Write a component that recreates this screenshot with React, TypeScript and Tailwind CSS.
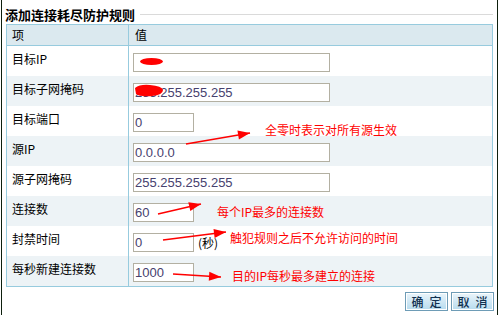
import React from "react";

interface RuleRow {
  label: string;
  value: string;
  wide?: boolean;
  suffix?: string;
}

const rows: RuleRow[] = [
  { label: "目标IP", value: "", wide: true },
  { label: "目标子网掩码", value: "255.255.255.255", wide: true },
  { label: "目标端口", value: "0" },
  { label: "源IP", value: "0.0.0.0", wide: true },
  { label: "源子网掩码", value: "255.255.255.255", wide: true },
  { label: "连接数", value: "60" },
  { label: "封禁时间", value: "0", suffix: "(秒)" },
  { label: "每秒新建连接数", value: "1000" },
];

// red hand-drawn notes laid over the screenshot
const notes = [
  { text: "全零时表示对所有源生效", className: "left-[265px] top-[124px]" },
  { text: "每个IP最多的连接数", className: "left-[217px] top-[206px]" },
  { text: "触犯规则之后不允许访问的时间", className: "left-[230px] top-[232px]" },
  { text: "目的IP每秒最多建立的连接", className: "left-[232px] top-[270px]" },
];

const arrows = [
  [186, 144, 250, 133],
  [158, 214, 201, 204],
  [163, 240, 226, 232],
  [173, 274, 221, 277],
];

function arrowHead(x1: number, y1: number, x2: number, y2: number) {
  const len = Math.hypot(x2 - x1, y2 - y1);
  const ux = (x2 - x1) / len;
  const uy = (y2 - y1) / len;
  const bx = x2 - ux * 12;
  const by = y2 - uy * 12;
  const px = -uy * 4.5;
  const py = ux * 4.5;
  return `${x2},${y2} ${bx + px},${by + py} ${bx - px},${by - py}`;
}

const App: React.FC = () => {
  return (
    <div
      className="relative w-[499px] h-[315px] bg-white overflow-hidden text-black"
      style={{ fontFamily: '"Noto Sans CJK SC", "Noto Sans", sans-serif' }}
    >
      <div className="ml-[1px] w-[497px] h-full border-x border-[#0d1f0d] px-[4px]">
        {/* title */}
        <div className="h-[24px] pt-[4px] flex items-center">
          <div className="-ml-[1px] text-[13px] leading-[13px] font-bold">
            添加连接耗尽防护规则
          </div>
          <div className="flex-1 h-px bg-[#dadada] ml-[5px]"></div>
        </div>

        {/* table */}
        <div className="border border-[#97cbde]">
          <div className="grid grid-cols-[121px_1fr] h-[21px] bg-[#dbe9ef] border-b border-[#97cbde] text-[12px] leading-[12px]">
            <div className="flex items-center pl-[5px]">项</div>
            <div className="flex items-center pl-[6px] border-l border-[#97cbde]">值</div>
          </div>
          {rows.map((row, idx) => (
            <div
              key={row.label}
              className={`grid grid-cols-[121px_1fr] h-[30px] ${idx % 2 === 1 ? "bg-[#edf3f6]" : "bg-white"}`}
            >
              <div className="pl-[5px] pt-[7px] text-[12px] leading-[12px]">{row.label}</div>
              <div className="border-l border-[#97cbde] pl-[4px] pt-[7px] flex items-start">
                <input
                  readOnly
                  value={row.value}
                  className={`${row.wide ? "w-[197px]" : "w-[61px]"} h-[19px] border border-[#b3b0a2] bg-white px-[1px] text-[13px] text-[#46416e] outline-none`}
                  style={{ fontFamily: '"Liberation Sans", sans-serif' }}
                />
                {row.suffix && (
                  <span className="ml-[4px] mt-[3px] text-[12px] leading-[14px]">{row.suffix}</span>
                )}
              </div>
            </div>
          ))}
        </div>

        {/* buttons */}
        <div className="flex justify-end gap-[3px] mt-[5px] -mr-[1px]">
          {[["确", "定"], ["取", "消"]].map(([a, b]) => (
            <button
              key={a}
              className="w-[43px] h-[19px] flex items-center justify-center gap-[6px] border border-[#6e9cb6] bg-gradient-to-b from-[#eaf5fb] to-[#b7dbee] shadow-[inset_0_0_0_1px_#ffffff] text-[12px] leading-[12px] text-[#12304f] font-medium"
            >
              <span>{a}</span>
              <span>{b}</span>
            </button>
          ))}
        </div>
      </div>

      {/* red annotations */}
      {notes.map((note) => (
        <div
          key={note.text}
          className={`absolute ${note.className} text-[12px] leading-[12px] text-[#ff0000] whitespace-nowrap`}
        >
          {note.text}
        </div>
      ))}

      <svg className="absolute left-0 top-0 pointer-events-none" width="499" height="315">
        <ellipse cx="151.5" cy="61.5" rx="11.5" ry="3.5" fill="#ff0000" />
        <path d="M135 88 Q140 84 150 85 Q162 86 163 90 Q163 95 152 96 Q140 97 136 94 Z" fill="#ff0000" />
        {arrows.map(([x1, y1, x2, y2], i) => (
          <g key={i}>
            <line x1={x1} y1={y1} x2={x2} y2={y2} stroke="#ff0000" strokeWidth="1.5" />
            <polygon points={arrowHead(x1, y1, x2, y2)} fill="#ff0000" />
          </g>
        ))}
      </svg>
    </div>
  );
};

export default App;
